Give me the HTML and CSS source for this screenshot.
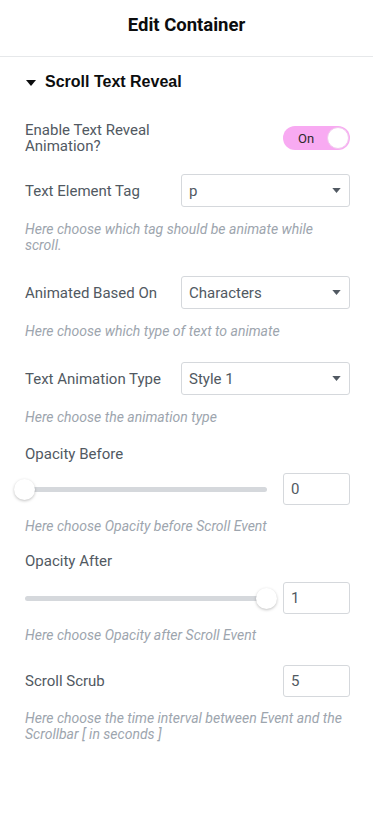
FILE: index.html
```html
<!DOCTYPE html>
<html>
<head>
<meta charset="utf-8">
<link rel="stylesheet" href="styles.css">
</head>
<body>
<div class="panel">
  <header class="panel-header">Edit Container</header>
  <div class="section-head">
    <svg class="caret" width="10" height="6" viewBox="0 0 10 6"><path d="M0 0H10L5 6Z" fill="#0c0d0e"/></svg>
    <span>Scroll Text Reveal</span>
  </div>
  <div class="controls">
    <div class="row row-enable">
      <label class="label label-wrap">Enable Text Reveal Animation?</label>
      <div class="toggle"><span class="toggle-text">On</span><span class="knob"></span></div>
    </div>

    <div class="row row-select">
      <label class="label">Text Element Tag</label>
      <div class="select"><span>p</span><svg width="10" height="6" viewBox="0 0 10 6"><path d="M0 0H10L5 6Z" fill="#515962"/></svg></div>
    </div>
    <p class="help">Here choose which tag should be animate while scroll.</p>

    <div class="row row-select">
      <label class="label">Animated Based On</label>
      <div class="select"><span>Characters</span><svg width="10" height="6" viewBox="0 0 10 6"><path d="M0 0H10L5 6Z" fill="#515962"/></svg></div>
    </div>
    <p class="help">Here choose which type of text to animate</p>

    <div class="row row-select">
      <label class="label">Text Animation Type</label>
      <div class="select"><span>Style 1</span><svg width="10" height="6" viewBox="0 0 10 6"><path d="M0 0H10L5 6Z" fill="#515962"/></svg></div>
    </div>
    <p class="help">Here choose the animation type</p>

    <div class="label label-block">Opacity Before</div>
    <div class="row slider-row">
      <div class="slider"><div class="track"></div><span class="thumb" style="left:0%"></span></div>
      <div class="num">0</div>
    </div>
    <p class="help help-slider">Here choose Opacity before Scroll Event</p>

    <div class="label label-block label-after">Opacity After</div>
    <div class="row slider-row slider-row2">
      <div class="slider"><div class="track"></div><span class="thumb" style="left:100%"></span></div>
      <div class="num">1</div>
    </div>
    <p class="help help-slider">Here choose Opacity after Scroll Event</p>

    <div class="row row-scrub">
      <label class="label">Scroll Scrub</label>
      <div class="num">5</div>
    </div>
    <p class="help help-slider">Here choose the time interval between Event and the Scrollbar [ in seconds ]</p>
  </div>
</div>
</body>
</html>
```

FILE: styles.css
```css
* { box-sizing: border-box; }
html, body { margin: 0; padding: 0; background: #fff; }
body { font-family: Roboto, "Noto Sans", sans-serif; color: #515962; width: 373px; }

.panel-header {
  height: 57px;
  border-bottom: 1px solid #e6e8ea;
  display: flex;
  align-items: center;
  justify-content: center;
  font-size: 18.5px;
  font-weight: 700;
  color: #0c0d0e;
  padding-bottom: 7px;
}

.section-head {
  height: 50px;
  display: flex;
  align-items: center;
  padding-left: 26px;
  font-family: "Liberation Sans", Arial, sans-serif;
  font-weight: 700;
  font-size: 16px;
  color: #0c0d0e;
  gap: 9px;
}
.section-head .caret { margin-top: 1px; }

.controls { padding: 0 23px 0 25px; }

.row { display: flex; align-items: center; justify-content: space-between; }
.label { font-size: 15px; line-height: 16px; color: #515962; }
.label-wrap { width: 180px; }
.row-enable { margin-top: 15px; }

.toggle {
  width: 67px;
  height: 24px;
  border-radius: 12px;
  background: #f8aaf2;
  position: relative;
  display: flex;
  align-items: center;
  padding-left: 15px;
}
.toggle-text { font-size: 13px; color: #2b2b2b; }
.knob {
  position: absolute;
  right: 1px;
  top: 1px;
  width: 22px;
  height: 22px;
  border-radius: 50%;
  background: #fff;
  border: 1px solid #f1c9ee;
}

.row-select { margin-top: 20px; }
.help + .row-select { margin-top: 23px; }

.select {
  width: 169px;
  height: 33px;
  border: 1px solid #d5d8dc;
  border-radius: 3px;
  display: flex;
  align-items: center;
  justify-content: space-between;
  padding: 0 8px 0 7px;
  font-size: 15px;
  color: #515962;
}
.select svg { width: 9px; height: 5px; }

.help {
  margin: 14px 0 0;
  font-size: 14px;
  line-height: 16px;
  font-style: italic;
  color: #9da5ae;
}
.help-slider { margin-top: 13px; }

.label-block { margin-top: 21px; }
.label-after { margin-top: 19px; }

.slider-row { margin-top: 11px; }
.slider-row2 { margin-top: 13px; }
.slider { position: relative; flex: 1; margin-right: 16px; height: 21px; display: flex; align-items: center; }
.track { width: 100%; height: 5px; border-radius: 3px; background: #d5d8dc; }
.thumb {
  position: absolute;
  top: 0;
  width: 21px;
  height: 21px;
  margin-left: -11px;
  border-radius: 50%;
  background: #fff;
  box-shadow: 0 1px 3px rgba(0,0,0,0.25);
}

.num {
  width: 67px;
  height: 32px;
  border: 1px solid #d5d8dc;
  border-radius: 3px;
  display: flex;
  align-items: center;
  padding-left: 7px;
  font-size: 15px;
  color: #515962;
}
.row-scrub { margin-top: 22px; }
```
